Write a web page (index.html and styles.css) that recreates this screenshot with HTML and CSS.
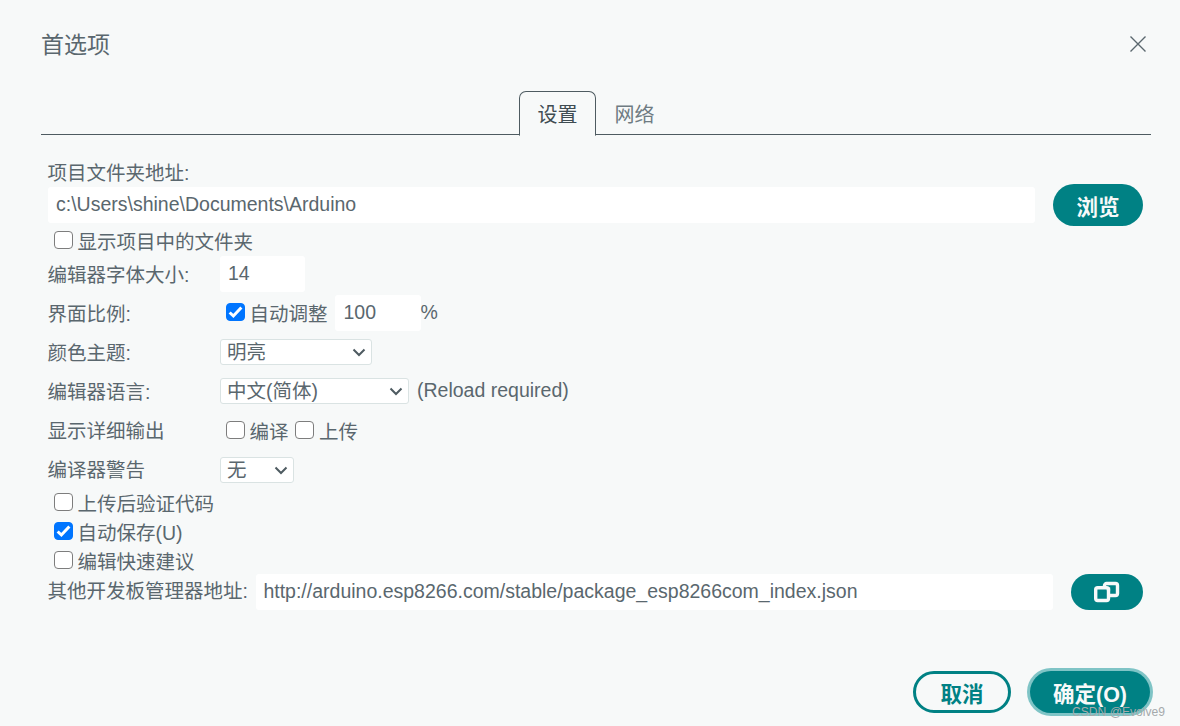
FILE: index.html
```html
<!DOCTYPE html>
<html lang="zh-CN">
<head>
<meta charset="utf-8">
<title>首选项</title>
<link rel="stylesheet" href="styles.css">
</head>
<body>
<div class="dialog">
  <header class="head">
    <h1 class="title">首选项</h1>
    <button class="close" type="button" aria-label="关闭">
      <svg width="16" height="16" viewBox="0 0 16 16"><path d="M.5.5l15 15M15.500.5l-15 15" fill="none" stroke="#5a676e" stroke-width="1.400"/></svg>
    </button>
  </header>
  <nav class="tabs">
    <div class="tab active">设置</div>
    <div class="tab">网络</div>
  </nav>
  <form class="form">
    <div class="row label-row">项目文件夹地址:</div>
    <div class="row path-row">
      <input class="input grow" type="text" value="c:\Users\shine\Documents\Arduino">
      <button class="btn browse" type="button">浏览</button>
    </div>
    <label class="row check-first"><input type="checkbox"><span>显示项目中的文件夹</span></label>
    <div class="row size-row">
      <span class="label">编辑器字体大小:</span>
      <input class="input small" type="text" value="14">
    </div>
    <div class="row scale-row">
      <span class="label">界面比例:</span>
      <label class="inline"><input type="checkbox" checked><span>自动调整</span></label>
      <input class="input scale" type="text" value="100">
      <span>%</span>
    </div>
    <div class="row sel-row theme">
      <span class="label">颜色主题:</span>
      <select class="select w-theme"><option>明亮</option></select>
    </div>
    <div class="row sel-row lang">
      <span class="label">编辑器语言:</span>
      <select class="select w-lang"><option>中文(简体)</option></select>
      <span class="note">(Reload required)</span>
    </div>
    <div class="row sel-row verbose">
      <span class="label">显示详细输出</span>
      <label class="inline"><input type="checkbox"><span>编译</span></label>
      <label class="inline second"><input type="checkbox"><span>上传</span></label>
    </div>
    <div class="row sel-row warn">
      <span class="label">编译器警告</span>
      <select class="select w-warn"><option>无</option></select>
    </div>
    <label class="row check first"><input type="checkbox"><span>上传后验证代码</span></label>
    <label class="row check"><input type="checkbox" checked><span>自动保存(U)</span></label>
    <label class="row check"><input type="checkbox"><span>编辑快速建议</span></label>
    <div class="row url-row">
      <span class="url-label">其他开发板管理器地址:</span>
      <input class="input grow" type="text" value="http://arduino.esp8266.com/stable/package_esp8266com_index.json">
      <button class="btn expand" type="button" aria-label="展开">
        <svg width="26" height="22" viewBox="0 0 26 22"><path d="M10.500 6V4.500a2 2 0 0 1 2-2h9a2 2 0 0 1 2 2v8a2 2 0 0 1-2 2H14.500M14.500 6.500v3" fill="none" stroke="#f7f9f9" stroke-width="3.400"/><rect x="1.700" y="6.700" width="12.800" height="12.800" rx="2" fill="none" stroke="#f7f9f9" stroke-width="3.400"/></svg>
      </button>
    </div>
  </form>
  <footer class="foot">
    <button class="btn cancel" type="button">取消</button>
    <button class="btn ok" type="button">确定(O)</button>
  </footer>
  <div class="mark">CSDN @Evolve9</div>
</div>
</body>
</html>
```
FILE: styles.css
```css
* { box-sizing: border-box; }
html, body { margin: 0; height: 100%; }
body {
  background: #f7f9f9;
  color: #5a676e;
  font-family: "Liberation Sans", "Noto Sans CJK SC", sans-serif;
  font-size: 19.5px;
  overflow: hidden;
}
.dialog {
  position: relative;
  height: 726px;
  display: flex;
  flex-direction: column;
  padding: 0 29px 13px 41px;
}
.head {
  height: 91px;
  display: flex;
  justify-content: space-between;
  align-items: flex-start;
  padding-top: 28px;
  flex: none;
}
.title { margin: 0; font-size: 23px; font-weight: 400; line-height: 34px; }
.close {
  border: 0; background: none; padding: 0; margin: 8px 5px 0 0; width: 16px; height: 16px; display: block;
}
.tabs {
  flex: none;
  height: 44px;
  display: flex;
  justify-content: center;
  border-bottom: 1px solid #4e5b61;
  font-size: 20px;
}
.tab {
  height: 45px;
  width: 77px;
  line-height: 46px;
  text-align: center;
  border: 1px solid transparent;
  color: #6f7b82;
}
.tabs .active {
  color: #3f4c52;
  border-color: #4e5b61;
  border-bottom-color: transparent;
  border-radius: 7px 7px 0 0;
  background: #f7f9f9;
}
.form { padding: 0 8px 0 7px; flex: none; }
.row { display: flex; align-items: center; }
.row span { padding-bottom: 2px; }
.label-row { height: 24px; margin-top: 25px; padding-bottom: 2px; margin-left: -.5px; }
.path-row { height: 42px; gap: 18px; }
.input {
  height: 36px;
  border: 0;
  border-radius: 3px;
  background: #fff;
  padding: 0 8px 2px;
  color: #5a676e;
  font: inherit;
  outline: none;
  min-width: 0;
}
.grow { flex: 1; }
.btn {
  border: 0;
  background: #008184;
  color: #f7f9f9;
  border-radius: 21px;
  font: inherit;
  font-size: 21.500px;
  font-weight: 700;
  padding: 0;
  display: flex;
  align-items: center;
  justify-content: center;
}
.browse { width: 90px; height: 42px; }
input[type="checkbox"] {
  appearance: none;
  width: 18.500px;
  height: 18.500px;
  margin: 0 0 2px;
  flex: none;
  border: 1.600px solid #7d7d7d;
  border-radius: 4px;
  background: #fff;
}
input[type="checkbox"]:checked {
  border-color: #0075ff;
  background: #0075ff url("data:image/svg+xml,%3Csvg xmlns='http://www.w3.org/2000/svg' viewBox='0 0 16 16'%3E%3Cpath d='M2.500 8.500l3.500 3.500 7.500-8.500' fill='none' stroke='%23fff' stroke-width='2.800'/%3E%3C/svg%3E") center / 100% no-repeat;
}
.check-first { height: 30px; padding-left: 6px; gap: 5px; }
.check { height: 26px; padding-left: 6px; gap: 5px; margin-top: 3px; }
.check.first { margin-top: 7px; }
.label { width: 172.500px; flex: none; margin-left: -.5px; }
.size-row { height: 36px; }
.small { width: 85px; }
.scale-row { height: 36px; margin-top: 3px; }
.inline { display: flex; align-items: center; gap: 5px; margin-left: 6px; }
.scale { width: 86px; margin-left: 7px; padding-left: 9px; }
.sel-row { height: 26px; }
.theme { margin-top: 8px; }
.lang { margin-top: 13px; }
.verbose { margin-top: 14px; }
.warn { margin-top: 13px; }
.verbose .label, .warn .label { padding-bottom: 4px; }
.second { margin-left: 6.500px; gap: 5.500px; }
.select {
  appearance: none;
  height: 26px;
  border: 1px solid #dae3e3;
  border-radius: 3px;
  background: #fff url("data:image/svg+xml,%3Csvg xmlns='http://www.w3.org/2000/svg' width='14' height='9' viewBox='0 0 14 9'%3E%3Cpath d='M1.500 1.500L7 7l5.500-5.500' fill='none' stroke='%234e5b61' stroke-width='2'/%3E%3C/svg%3E") no-repeat right 5px center;
  padding: 0 0 0 6px;
  color: #5a676e;
  font: inherit;
  line-height: 24px;
}
.w-theme { width: 152px; }
.w-lang { width: 189px; }
.w-warn { width: 74px; }
.note { margin-left: 8px; }
.url-row { height: 36px; }
.url-row .input { padding-left: 7px; }
.url-row .url-label { margin: 0 8.500px 0 -.5px; flex: none; padding-bottom: 5px; }
.expand { width: 72px; height: 36px; margin-left: 18px; flex: none; }
.foot {
  margin-top: auto;
  display: flex;
  justify-content: flex-end;
  gap: 19px;
  padding-right: 1px;
}
.cancel {
  width: 98px;
  height: 42px;
  background: none;
  border: 3px solid #008184;
  color: #008184;
}
.ok {
  width: 120px;
  height: 42px;
  box-shadow: 0 0 0 3px #7fc4c6;
}
.mark {
  position: absolute;
  right: 15px;
  bottom: 7px;
  font-size: 12.100px;
  line-height: 14px;
  color: rgb(165, 170, 172);
}
```
